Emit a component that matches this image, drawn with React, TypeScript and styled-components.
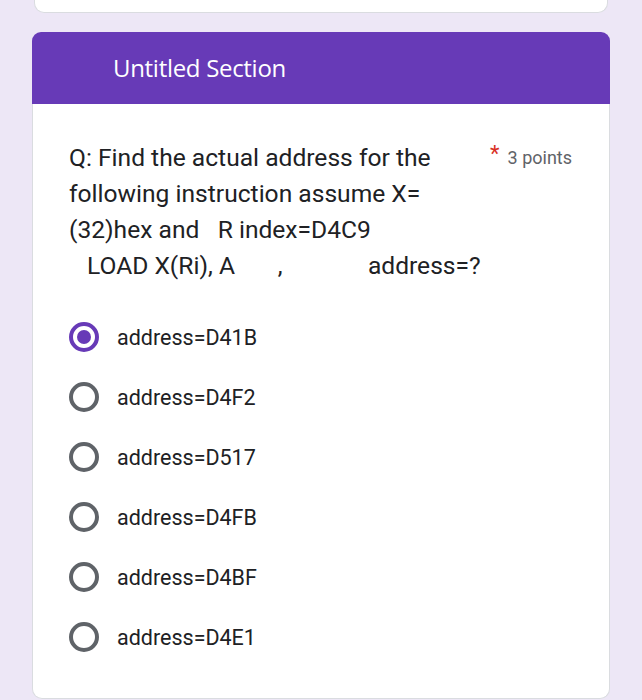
import React from "react";
import styled, { createGlobalStyle } from "styled-components";

const Global = createGlobalStyle`
  html, body { margin: 0; padding: 0; }
  body {
    background: #ede7f6;
    font-family: Roboto, "Liberation Sans", Arial, sans-serif;
    width: 642px;
    height: 700px;
    overflow: hidden;
  }
`;

const Page = styled.div`
  display: flex;
  flex-direction: column;
  gap: 19px;
  padding: 0 32px;
`;

const TopCard = styled.div`
  height: 12px;
  margin: 0 2px;
  background: #fff;
  border: 1px solid #dadce0;
  border-top: none;
  border-radius: 0 0 10px 10px;
`;

const Section = styled.div`
  display: flex;
  flex-direction: column;
`;

const Header = styled.div`
  height: 72px;
  background: #673ab7;
  border-radius: 9px 9px 0 0;
  display: flex;
  align-items: center;
  padding-left: 81px;
  padding-bottom: 2px;
  box-sizing: border-box;
`;

const Title = styled.h1`
  margin: 0;
  color: #fff;
  font-family: "Open Sans", Roboto, sans-serif;
  font-weight: 400;
  font-size: 24px;
  letter-spacing: -0.3px;
`;

const Body = styled.div`
  background: #fff;
  border: 1px solid #dadce0;
  border-top: none;
  border-radius: 0 0 10px 10px;
  height: 594px;
  box-sizing: content-box;
  padding: 36px 37px 0 36px;
  box-sizing: border-box;
  height: 595px;
  display: flex;
  flex-direction: column;
`;

const QuestionRow = styled.div`
  display: flex;
  justify-content: space-between;
  align-items: flex-start;
`;

const QuestionText = styled.div`
  color: #202124;
  font-size: 24.6px;
  line-height: 36px;
`;

const Line = styled.div<{ $indent?: number }>`
  white-space: pre;
  padding-left: ${(p) => p.$indent ?? 0}px;
`;

const Points = styled.div`
  display: flex;
  align-items: flex-start;
  gap: 8px;
  padding-top: 6px;
  color: #5f6368;
  font-size: 18px;
  line-height: 24px;
`;

const Star = styled.span`
  color: #d93025;
  font-size: 22px;
  line-height: 16px;
`;

const Options = styled.div`
  display: flex;
  flex-direction: column;
  margin-top: 23px;
`;

const Option = styled.label`
  height: 60px;
  display: flex;
  align-items: center;
  gap: 18px;
`;

const Radio = styled.span<{ $checked?: boolean }>`
  width: 30px;
  height: 30px;
  box-sizing: border-box;
  border-radius: 50%;
  border: 4px solid ${(p) => (p.$checked ? "#673ab7" : "#5f6368")};
  display: flex;
  align-items: center;
  justify-content: center;
  &::after {
    content: "";
    width: 14px;
    height: 14px;
    border-radius: 50%;
    background: #673ab7;
    display: ${(p) => (p.$checked ? "block" : "none")};
  }
`;

const OptionLabel = styled.span`
  color: #202124;
  font-size: 21.5px;
`;

const options = [
  "address=D41B",
  "address=D4F2",
  "address=D517",
  "address=D4FB",
  "address=D4BF",
  "address=D4E1",
];

export default function App() {
  return (
    <>
      <Global />
      <Page>
        <TopCard />
        <Section>
          <Header>
            <Title>Untitled Section</Title>
          </Header>
          <Body>
            <QuestionRow>
              <QuestionText>
                <Line>Q: Find the actual address for the</Line>
                <Line>following instruction assume X=</Line>
                <Line>(32)hex and   R index=D4C9</Line>
                <Line $indent={18}>{"LOAD X(Ri), A       ,              address=?"}</Line>
              </QuestionText>
              <Points>
                <Star>*</Star>
                <span>3 points</span>
              </Points>
            </QuestionRow>
            <Options>
              {options.map((o, i) => (
                <Option key={o}>
                  <Radio $checked={i === 0} />
                  <OptionLabel>{o}</OptionLabel>
                </Option>
              ))}
            </Options>
          </Body>
        </Section>
      </Page>
    </>
  );
}
